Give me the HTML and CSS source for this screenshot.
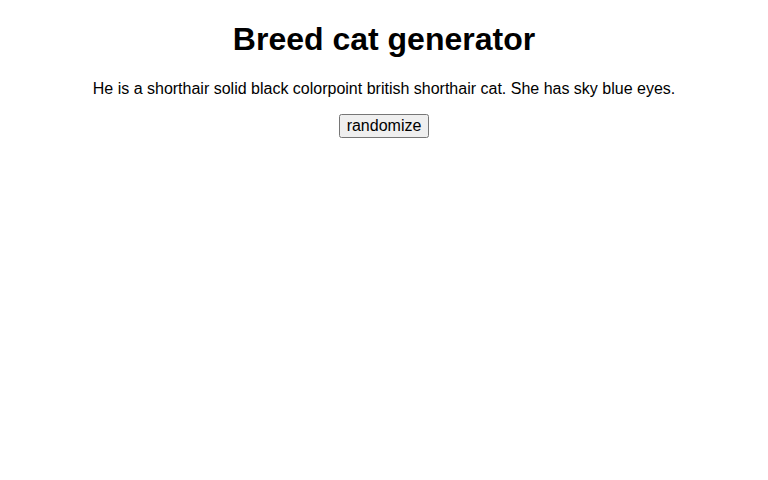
FILE: index.html
```html
<!DOCTYPE html>
<html lang="en">
<head>
    <meta charset="UTF-8">
    <meta name="viewport" content="width=device-width, initial-scale=1.0">
    <title>Breed cat generator</title>
    <link rel="stylesheet" href="styles.css">
</head>
<body>
    <div class="container">
        <h1>Breed cat generator</h1>
        <p id="description">He is a shorthair solid black colorpoint british shorthair cat. She has sky blue eyes.</p>
        <button class="randomize-button" onclick="randomize()">randomize</button>
    </div>

    <script>
        const pronouns = ['He', 'She'];
        const coats = ['shorthair', 'longhair'];
        const colors = ['solid black', 'solid white', 'blue tabby', 'red tabby', 'tortoiseshell'];
        const patterns = ['colorpoint', 'bicolor', 'mitted', 'van'];
        const breeds = ['british shorthair', 'siamese', 'maine coon', 'persian'];
        const eyes = ['sky blue', 'green', 'amber', 'copper'];

        function pick(list) {
            return list[Math.floor(Math.random() * list.length)];
        }

        function randomize() {
            const text = pick(pronouns) + ' is a ' + pick(coats) + ' ' + pick(colors) + ' ' +
                pick(patterns) + ' ' + pick(breeds) + ' cat. ' + pick(pronouns) +
                ' has ' + pick(eyes) + ' eyes.';
            document.getElementById('description').textContent = text;
        }
    </script>
</body>
</html>
```

FILE: styles.css
```css
body {
    margin: 0;
    font-family: "Liberation Sans", Arial, sans-serif;
    background: white;
    color: black;
}
.container {
    text-align: center;
}
.randomize-button {
    font-family: "Liberation Sans", Arial, sans-serif;
    font-size: 16px;
}
```
